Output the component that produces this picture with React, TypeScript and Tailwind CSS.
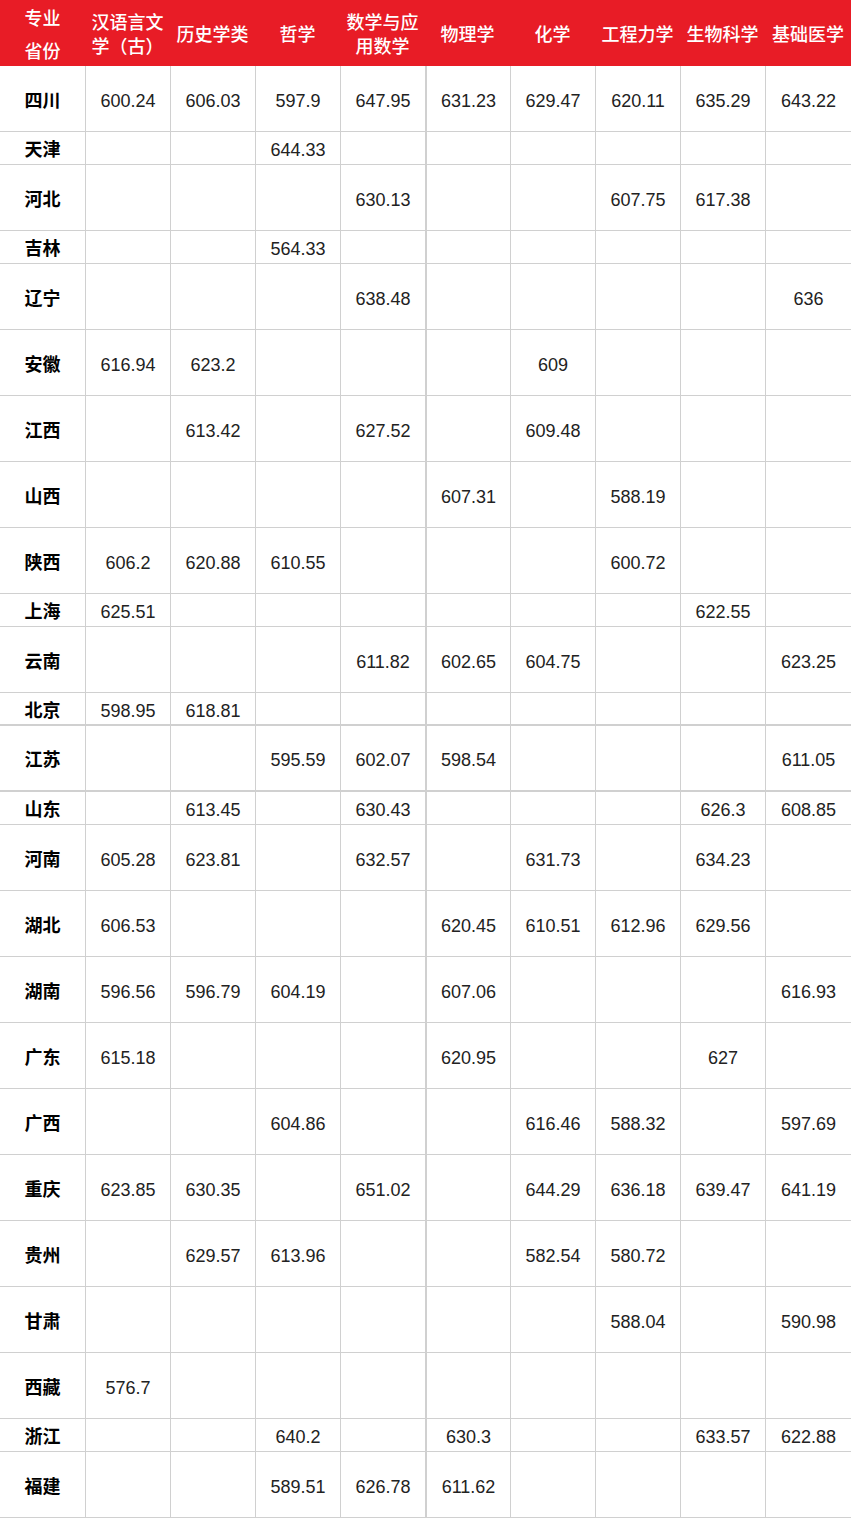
import React from "react";

type Row = { name: string; tall: boolean; v: (string | null)[]; thick?: boolean };

const headers: string[][] = [
  ["汉语言文", "学（古）"],
  ["历史学类"],
  ["哲学"],
  ["数学与应", "用数学"],
  ["物理学"],
  ["化学"],
  ["工程力学"],
  ["生物科学"],
  ["基础医学"],
];

const _ = null;
const rows: Row[] = [
  { name: "四川", tall: true, v: ["600.24", "606.03", "597.9", "647.95", "631.23", "629.47", "620.11", "635.29", "643.22"] },
  { name: "天津", tall: false, v: [_, _, "644.33", _, _, _, _, _, _] },
  { name: "河北", tall: true, v: [_, _, _, "630.13", _, _, "607.75", "617.38", _] },
  { name: "吉林", tall: false, v: [_, _, "564.33", _, _, _, _, _, _] },
  { name: "辽宁", tall: true, v: [_, _, _, "638.48", _, _, _, _, "636"] },
  { name: "安徽", tall: true, v: ["616.94", "623.2", _, _, _, "609", _, _, _] },
  { name: "江西", tall: true, v: [_, "613.42", _, "627.52", _, "609.48", _, _, _] },
  { name: "山西", tall: true, v: [_, _, _, _, "607.31", _, "588.19", _, _] },
  { name: "陕西", tall: true, v: ["606.2", "620.88", "610.55", _, _, _, "600.72", _, _] },
  { name: "上海", tall: false, v: ["625.51", _, _, _, _, _, _, "622.55", _] },
  { name: "云南", tall: true, v: [_, _, _, "611.82", "602.65", "604.75", _, _, "623.25"] },
  { name: "北京", tall: false, thick: true, v: ["598.95", "618.81", _, _, _, _, _, _, _] },
  { name: "江苏", tall: true, thick: true, v: [_, _, "595.59", "602.07", "598.54", _, _, _, "611.05"] },
  { name: "山东", tall: false, v: [_, "613.45", _, "630.43", _, _, _, "626.3", "608.85"] },
  { name: "河南", tall: true, v: ["605.28", "623.81", _, "632.57", _, "631.73", _, "634.23", _] },
  { name: "湖北", tall: true, v: ["606.53", _, _, _, "620.45", "610.51", "612.96", "629.56", _] },
  { name: "湖南", tall: true, v: ["596.56", "596.79", "604.19", _, "607.06", _, _, _, "616.93"] },
  { name: "广东", tall: true, v: ["615.18", _, _, _, "620.95", _, _, "627", _] },
  { name: "广西", tall: true, v: [_, _, "604.86", _, _, "616.46", "588.32", _, "597.69"] },
  { name: "重庆", tall: true, v: ["623.85", "630.35", _, "651.02", _, "644.29", "636.18", "639.47", "641.19"] },
  { name: "贵州", tall: true, v: [_, "629.57", "613.96", _, _, "582.54", "580.72", _, _] },
  { name: "甘肃", tall: true, v: [_, _, _, _, _, _, "588.04", _, "590.98"] },
  { name: "西藏", tall: true, v: ["576.7", _, _, _, _, _, _, _, _] },
  { name: "浙江", tall: false, v: [_, _, "640.2", _, "630.3", _, _, "633.57", "622.88"] },
  { name: "福建", tall: true, v: [_, _, "589.51", "626.78", "611.62", _, _, _, _] },
];

const font = { fontFamily: '"Liberation Sans", "Noto Sans CJK SC", sans-serif' };

export default function App() {
  return (
    <div className="w-[851px] bg-white" style={font}>
      <div className="flex h-[66px] bg-[#e81c26] text-white text-[18px] font-medium">
        <div className="w-[85px] flex flex-col items-center justify-between pt-[7px] pb-[2px] leading-[24px]">
          <span>专业</span>
          <span>省份</span>
        </div>
        {headers.map((h, i) => (
          <div
            key={i}
            className={`${i === 8 ? "w-[86px]" : "w-[85px]"} flex flex-col items-center justify-center pt-[4px] leading-[24px] whitespace-nowrap`}
          >
            {h.map((t, j) => (
              <span key={j}>{t}</span>
            ))}
          </div>
        ))}
      </div>
      {rows.map((r) => (
        <div
          key={r.name}
          className={`flex ${r.tall ? "h-[66px]" : "h-[33px]"} ${r.thick ? "border-b-2" : "border-b"} border-[#d0d0d0]`}
        >
          <div className="w-[85px] flex items-center justify-center pt-[5px] text-[18px] font-bold text-black">
            {r.name}
          </div>
          {r.v.map((val, i) => (
            <div
              key={i}
              className={`${i === 8 ? "w-[86px]" : "w-[85px]"} ${i === 4 ? "border-l-2" : "border-l"} border-[#d0d0d0] flex items-center justify-center pt-[5px] text-[18px] text-[#222222]`}
            >
              {val}
            </div>
          ))}
        </div>
      ))}
    </div>
  );
}
